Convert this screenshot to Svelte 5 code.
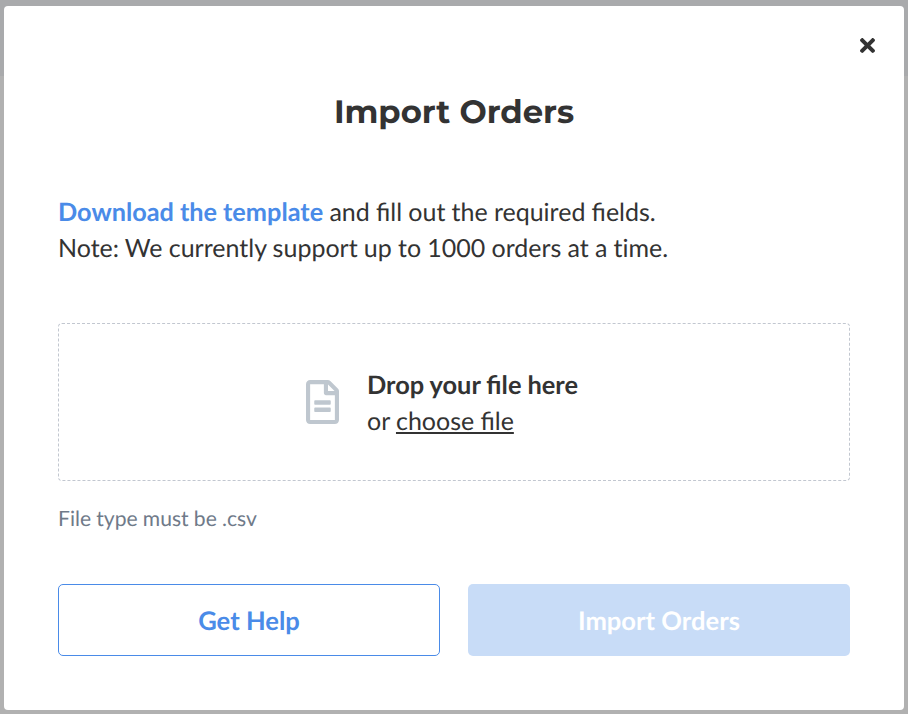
<script lang="ts">
	const title = 'Import Orders';
	const maxOrders = 1000;
</script>

<div class="overlay">
	<div class="modal" role="dialog" aria-label={title}>
		<button class="close" aria-label="Close">
			<svg viewBox="0 80 352 352" width="15" height="15">
				<path d="M242.72 256l100.07-100.07c12.28-12.28 12.28-32.19 0-44.48l-22.24-22.24c-12.28-12.28-32.19-12.28-44.48 0L176 189.28 75.93 89.21c-12.28-12.28-32.19-12.28-44.48 0L9.21 111.45c-12.28 12.28-12.28 32.19 0 44.48L109.28 256 9.21 356.07c-12.28 12.28-12.28 32.19 0 44.48l22.24 22.24c12.28 12.28 32.2 12.28 44.48 0L176 322.72l100.07 100.07c12.28 12.28 32.2 12.28 44.48 0l22.24-22.24c12.28-12.28 12.28-32.19 0-44.48L242.72 256z" />
			</svg>
		</button>

		<h1>{title}</h1>

		<p class="intro">
			<a href="#template">Download the template</a> and fill out the required fields.<br />
			Note: We currently support up to {maxOrders} orders at a <span class="plain">time.</span>
		</p>

		<div class="dropzone">
			<svg class="file" viewBox="0 0 384 512" width="33" height="44">
				<path d="M288 248v28c0 6.6-5.4 12-12 12H108c-6.6 0-12-5.4-12-12v-28c0-6.6 5.4-12 12-12h168c6.6 0 12 5.4 12 12zm-12 72H108c-6.6 0-12 5.4-12 12v28c0 6.6 5.4 12 12 12h168c6.6 0 12-5.4 12-12v-28c0-6.6-5.4-12-12-12zm108-188.1V464c0 26.5-21.5 48-48 48H48c-26.5 0-48-21.5-48-48V48C0 21.5 21.5 0 48 0h204.1C264.8 0 277 5.1 286 14.1L369.9 98c9 8.9 14.1 21.2 14.1 33.9zm-128-80V128h76.1L256 51.9zM336 464V176H232c-13.3 0-24-10.7-24-24V48H48v416h288z" />
			</svg>
			<div class="prompt">
				<strong>Drop your file here</strong><br />
				or <span class="choose">choose file</span>
			</div>
		</div>

		<p class="hint">File type must be .csv</p>

		<div class="actions">
			<button class="help">Get Help</button>
			<button class="submit" disabled>Import Orders</button>
		</div>
	</div>
</div>

<style>
	:global(body) {
		background: #b1b1b1;
	}
	.overlay {
		box-sizing: border-box;
		height: 714px;
		padding: 6px 4px 4px;
		background: linear-gradient(#a9aaac 76px, #b1b1b1 76px);
		font-family: Lato, sans-serif;
		font-size: 25px;
		line-height: 36px;
		word-spacing: -0.2px;
		text-rendering: geometricPrecision;
		color: #333;
	}
	.modal {
		box-sizing: border-box;
		height: 704px;
		padding: 32px 54px 54px;
		border-radius: 4px;
		background: #fff;
		display: flex;
		flex-direction: column;
	}
	button {
		margin: 0;
		padding: 0;
		border: 0;
		background: none;
		font: inherit;
		text-rendering: inherit;
	}
	.close {
		align-self: flex-end;
		margin-right: -25px;
		width: 15px;
		height: 15px;
		line-height: 0;
	}
	.close svg {
		fill: #333;
	}
	h1 {
		margin: 40px 0 0;
		font-family: Montserrat, Inter, sans-serif;
		font-size: 32.3px;
		line-height: 40px;
		font-weight: 700;
		word-spacing: 0;
		text-align: center;
	}
	p {
		margin: 0;
	}
	.intro {
		height: 72px;
		margin-top: 61px;
	}
	.plain {
		font-variant-ligatures: none;
	}
	a {
		color: #4a8be8;
		font-size: 25.3px;
		font-weight: 700;
		text-decoration: none;
	}
	.dropzone {
		box-sizing: border-box;
		height: 158px;
		margin-top: 57px;
		padding-right: 24px;
		border: 1px dashed #c2c7d0;
		border-radius: 4px;
		display: flex;
		align-items: center;
		justify-content: center;
		gap: 28px;
	}
	.file {
		fill: #bfc7cf;
	}
	.prompt {
		padding-top: 2px;
	}
	strong {
		font-size: 25.4px;
		font-weight: 700;
	}
	.choose {
		text-decoration: underline;
	}
	.hint {
		margin-top: 20px;
		font-size: 21.1px;
		color: #6f7a89;
	}
	.actions {
		margin-top: 47px;
		display: grid;
		grid-template-columns: 1fr 1fr;
		gap: 28px;
	}
	.actions button {
		height: 72px;
		padding-top: 2px;
		border-radius: 5px;
		font-size: 25.6px;
		font-weight: 700;
	}
	.help {
		border: 1px solid #4a8be8;
		color: #4a8be8;
	}
	.submit {
		background: #c8dcf7;
		color: #fff;
	}
</style>
